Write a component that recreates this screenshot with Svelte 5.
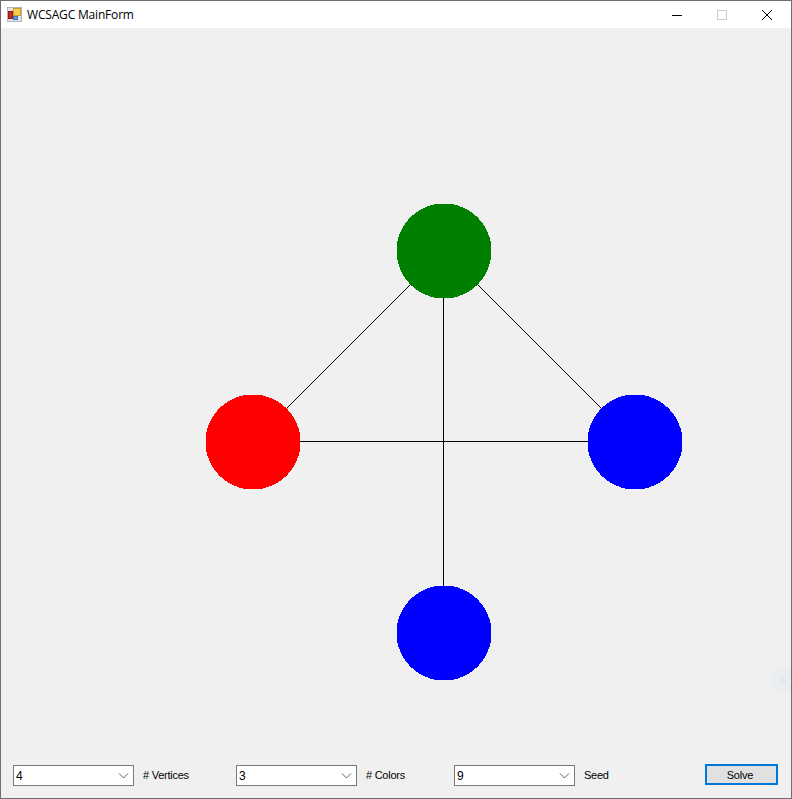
<script>
  const nodes = [
    { x: 444, y: 223, fill: '#008000' },
    { x: 253, y: 414, fill: '#ff0000' },
    { x: 635, y: 414, fill: '#0000ff' },
    { x: 444, y: 605, fill: '#0000ff' }
  ];
  const edges = [
    [444, 223, 253, 414],
    [444, 223, 635, 414],
    [443.5, 223, 443.5, 605],
    [253, 413.5, 635, 413.5]
  ];
  const controls = [
    { value: '4', label: '# Vertices', labelWidth: 102 },
    { value: '3', label: '# Colors', labelWidth: 97 },
    { value: '9', label: 'Seed', labelWidth: 130 }
  ];
</script>

<div class="window">
  <header class="titlebar">
    <svg class="app-icon" viewBox="0 0 15 15" width="15" height="15" aria-hidden="true">
      <rect x="0" y="0" width="15" height="15" fill="#e4e4e4" />
      <rect x="0.5" y="0.5" width="14" height="14" fill="none" stroke="#b5b5b5" />
      <rect x="6.5" y="1.5" width="7" height="7" fill="#f7cd4e" stroke="#c79a2a" />
      <rect x="1.5" y="4.5" width="4" height="7" fill="#d3261f" stroke="#8a1a16" />
      <rect x="6.5" y="9.5" width="4" height="3" fill="#5b9be8" stroke="#3c74c0" />
    </svg>
    <span class="title">WCSAGC MainForm</span>
    <div class="caption-buttons">
      <span class="caption-btn"><svg width="12" height="12" viewBox="0 0 12 12"><path d="M1 6.5H11" stroke="#000" fill="none" /></svg></span>
      <span class="caption-btn"><svg width="12" height="12" viewBox="0 0 12 12"><rect x="1.5" y="1.5" width="9" height="9" stroke="#cccccc" fill="none" /></svg></span>
      <span class="caption-btn"><svg width="12" height="12" viewBox="0 0 12 12"><path d="M1 1L11 11M11 1L1 11" stroke="#000" fill="none" /></svg></span>
    </div>
  </header>

  <main class="client">
    <svg class="graph" width="790" height="737" viewBox="0 0 790 737">
      <g transform="translate(-1 0)">
        {#each edges as [x1, y1, x2, y2]}
          <line {x1} {y1} {x2} {y2} stroke="#000" stroke-width="1" />
        {/each}
        {#each nodes as n}
          <circle cx={n.x} cy={n.y} r="47.5" fill={n.fill} shape-rendering="crispEdges" />
        {/each}
      </g>
    </svg>

    <div class="toolbar">
      {#each controls as c}
        <div class="combo">
          <span>{c.value}</span>
          <svg width="11" height="6" viewBox="0 0 11 6"><path d="M1 0.5L5.5 5L10 0.5" stroke="#606060" fill="none" /></svg>
        </div>
        <span class="label" style="width: {c.labelWidth}px">{c.label}</span>
      {/each}
      <button class="solve" type="button">Solve</button>
    </div>

    <div class="ghost"><span></span></div>
  </main>
</div>

<style>
  :global(body) {
    margin: 0;
    background: #f0f0f0;
  }
  .window {
    position: relative;
    width: 792px;
    height: 799px;
    box-sizing: border-box;
    border: 1px solid #6f6f6f;
    display: flex;
    flex-direction: column;
    overflow: hidden;
    font-family: "Liberation Sans", Arial, sans-serif;
  }
  .titlebar {
    height: 27px;
    flex: none;
    background: #fff;
    display: flex;
    align-items: center;
    padding-left: 6px;
    padding-right: 2px;
  }
  .app-icon {
    margin-top: -1px;
  }
  .title {
    margin-left: 5px;
    font-family: "Open Sans", sans-serif;
    font-size: 12px;
    letter-spacing: -0.18px;
    color: #000;
    margin-top: -1px;
  }
  .caption-buttons {
    margin-left: auto;
    display: flex;
  }
  .caption-btn {
    width: 45px;
    height: 27px;
    display: flex;
    align-items: center;
    justify-content: center;
  }
  .client {
    flex: 1;
    position: relative;
    background: #f0f0f0;
    display: flex;
    flex-direction: column;
  }
  .graph {
    display: block;
    flex: none;
  }
  .toolbar {
    display: flex;
    align-items: flex-start;
    padding-left: 12px;
  }
  .combo {
    width: 121px;
    height: 21px;
    box-sizing: border-box;
    border: 1px solid #7a7a7a;
    background: #fff;
    display: flex;
    align-items: center;
    justify-content: space-between;
    padding: 0 3px 0 2px;
    font-size: 12px;
    color: #000;
    flex: none;
  }
  .combo svg {
    margin-right: 1px;
  }
  .label {
    flex: none;
    box-sizing: border-box;
    padding-left: 9px;
    height: 21px;
    line-height: 20px;
    font-size: 11px;
    letter-spacing: -0.25px;
    color: #000;
    white-space: nowrap;
  }
  .solve {
    flex: none;
    width: 73px;
    height: 21px;
    margin-top: -1px;
    box-sizing: border-box;
    border: 2px solid #0078d7;
    background: #e1e1e1;
    font: 11px "Liberation Sans", Arial, sans-serif;
    letter-spacing: -0.2px;
    color: #000;
    padding: 0 3px 0 0;
  }
  .ghost {
    position: absolute;
    left: 772px;
    top: 641px;
    width: 18px;
    height: 22px;
    background: #e9eef2;
    display: flex;
    align-items: center;
    justify-content: center;
  }
  .ghost span {
    width: 7px;
    height: 7px;
    border-radius: 50%;
    background: #e4e8ea;
  }
</style>
